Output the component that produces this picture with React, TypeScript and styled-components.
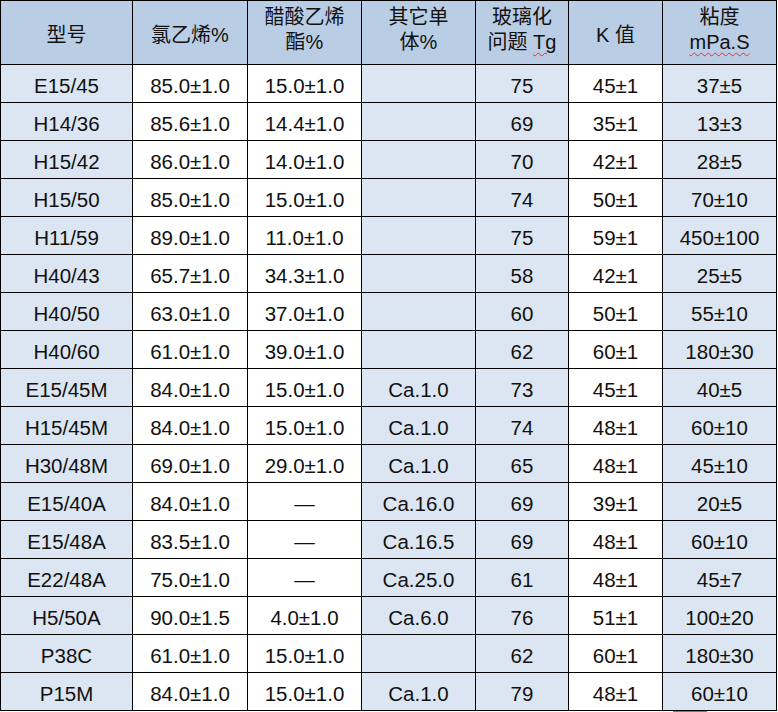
import * as React from 'react';
import styled, { createGlobalStyle } from 'styled-components';

const GlobalStyle = createGlobalStyle`
  html, body {
    margin: 0;
    padding: 0;
    background: #ffffff;
  }
  body {
    font-family: 'Liberation Sans', 'Noto Sans CJK SC', sans-serif;
    color: #111111;
  }
`;

const HEAD_BG = '#b9cde5';
const SHADE_BG = '#dce6f2';

// column widths include the right border of each cell
const widths = [132, 115, 114, 114, 93, 94, 114];
// which columns are tinted in the body
const shaded = [true, false, false, true, true, false, true];

const Table = styled.table`
  border-collapse: separate;
  border-spacing: 0;
  table-layout: fixed;
  width: 777px;
  border-left: 1px solid #000;
  border-top: 1px solid #000;
`;

const HeadCell = styled.th<{ $twoLine: boolean }>`
  box-sizing: border-box;
  height: 64px;
  padding: ${(p) => (p.$twoLine ? '0 0 5px' : '6px 0 0')};
  background: ${HEAD_BG};
  border-right: 1px solid #000;
  border-bottom: 1px solid #000;
  font-weight: normal;
  font-size: 20px;
  line-height: 25px;
  text-align: center;
  vertical-align: middle;
`;

const Cell = styled.td<{ $shade: boolean }>`
  box-sizing: border-box;
  height: 38px;
  padding: 4px 0 0;
  background: ${(p) => (p.$shade ? SHADE_BG : '#ffffff')};
  border-right: 1px solid #000;
  border-bottom: 1px solid #000;
  font-size: 20.5px;
  text-align: center;
  vertical-align: middle;
  white-space: nowrap;
`;

const Squiggle = styled.span`
  text-decoration: underline wavy #e03030;
  text-decoration-thickness: 1px;
  text-underline-offset: 3px;
`;

const Tab = styled.div`
  margin-left: 673px;
  width: 34px;
  height: 1px;
  background: #d4d4d4;
  border-top: 1px solid #7a7a7a;
`;

const headers: { label: React.ReactNode; twoLine: boolean }[] = [
  { label: '型号', twoLine: false },
  { label: '氯乙烯%', twoLine: false },
  { label: <>醋酸乙烯<br />酯%</>, twoLine: true },
  { label: <>其它单<br />体%</>, twoLine: true },
  { label: <>玻璃化<br />问题 <Squiggle>Tg</Squiggle></>, twoLine: true },
  { label: 'K 值', twoLine: false },
  { label: <>粘度<br /><Squiggle>mPa.S</Squiggle></>, twoLine: true },
];

const rows: string[][] = [
  ['E15/45', '85.0±1.0', '15.0±1.0', '', '75', '45±1', '37±5'],
  ['H14/36', '85.6±1.0', '14.4±1.0', '', '69', '35±1', '13±3'],
  ['H15/42', '86.0±1.0', '14.0±1.0', '', '70', '42±1', '28±5'],
  ['H15/50', '85.0±1.0', '15.0±1.0', '', '74', '50±1', '70±10'],
  ['H11/59', '89.0±1.0', '11.0±1.0', '', '75', '59±1', '450±100'],
  ['H40/43', '65.7±1.0', '34.3±1.0', '', '58', '42±1', '25±5'],
  ['H40/50', '63.0±1.0', '37.0±1.0', '', '60', '50±1', '55±10'],
  ['H40/60', '61.0±1.0', '39.0±1.0', '', '62', '60±1', '180±30'],
  ['E15/45M', '84.0±1.0', '15.0±1.0', 'Ca.1.0', '73', '45±1', '40±5'],
  ['H15/45M', '84.0±1.0', '15.0±1.0', 'Ca.1.0', '74', '48±1', '60±10'],
  ['H30/48M', '69.0±1.0', '29.0±1.0', 'Ca.1.0', '65', '48±1', '45±10'],
  ['E15/40A', '84.0±1.0', '—', 'Ca.16.0', '69', '39±1', '20±5'],
  ['E15/48A', '83.5±1.0', '—', 'Ca.16.5', '69', '48±1', '60±10'],
  ['E22/48A', '75.0±1.0', '—', 'Ca.25.0', '61', '48±1', '45±7'],
  ['H5/50A', '90.0±1.5', '4.0±1.0', 'Ca.6.0', '76', '51±1', '100±20'],
  ['P38C', '61.0±1.0', '15.0±1.0', '', '62', '60±1', '180±30'],
  ['P15M', '84.0±1.0', '15.0±1.0', 'Ca.1.0', '79', '48±1', '60±10'],
];

const App = () => (
  <>
    <GlobalStyle />
    <Table>
      <colgroup>
        {widths.map((w, i) => (
          <col key={i} style={{ width: w }} />
        ))}
      </colgroup>
      <thead>
        <tr>
          {headers.map((h, i) => (
            <HeadCell key={i} $twoLine={h.twoLine}>
              {h.label}
            </HeadCell>
          ))}
        </tr>
      </thead>
      <tbody>
        {rows.map((r) => (
          <tr key={r[0]}>
            {r.map((v, i) => (
              <Cell key={i} $shade={shaded[i]}>
                {v}
              </Cell>
            ))}
          </tr>
        ))}
      </tbody>
    </Table>
    <Tab />
  </>
);

export default App;
